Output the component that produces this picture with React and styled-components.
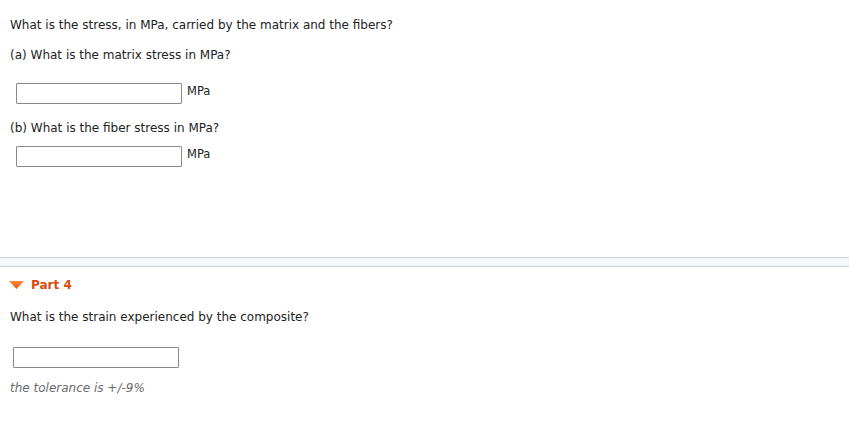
import React from 'react'
import styled, { createGlobalStyle } from 'styled-components'

const Global = createGlobalStyle`
  body {
    margin: 0;
    background: #fff;
    font-family: "DejaVu Sans", Verdana, sans-serif;
    font-size: 12px;
    color: #222;
  }
`

const Section = styled.div`
  display: flex;
  flex-direction: column;
  padding: 0 10px;
`

const Text = styled.p`
  margin: ${p => p.top || 0}px 0 0;
  line-height: 16px;
  color: #222;
`

const AnswerRow = styled.div`
  display: flex;
  align-items: flex-start;
  gap: 5px;
  margin: ${p => p.top || 0}px 0 0 ${p => p.left || 0}px;
`

const Field = styled.input`
  width: 166px;
  height: 21px;
  box-sizing: border-box;
  border: 1px solid #8a8a8a;
  border-radius: 1px;
  background: #fff;
  padding: 0 4px;
  font: inherit;
`

const Unit = styled.span`
  margin-top: 1px;
  line-height: 15px;
  font-size: 11.5px;
  color: #222;
`

const Divider = styled.div`
  margin-top: ${p => p.top}px;
  height: 8px;
  background: #f5f8fb;
  border-top: 1px solid #c9d0db;
  border-bottom: 1px solid #c9d0db;
`

const PartHeader = styled.div`
  display: flex;
  align-items: center;
  gap: 7px;
  margin-top: 10px;
  padding-left: 9px;
  height: 16px;
  color: #d84d0a;
  font-weight: bold;
  font-size: 12px;
`

const Tolerance = styled.p`
  margin: 12px 0 0;
  line-height: 16px;
  font-style: italic;
  color: #6b6b6b;
`

const Caret = () => (
  <svg width="15" height="8" viewBox="0 0 15 8">
    <defs>
      <linearGradient id="cg" x1="0" y1="0" x2="0" y2="1">
        <stop offset="0" stopColor="#ff8a3d" />
        <stop offset="1" stopColor="#e8500f" />
      </linearGradient>
    </defs>
    <polygon points="0,0 15,0 7.5,8" fill="url(#cg)" />
  </svg>
)

export default function App() {
  return (
    <>
      <Global />
      <Section>
        <Text top={17}>What is the stress, in MPa, carried by the matrix and the fibers?</Text>
        <Text top={14}>(a) What is the matrix stress in MPa?</Text>
        <AnswerRow top={20} left={6}>
          <Field />
          <Unit>MPa</Unit>
        </AnswerRow>
      </Section>
      <Section>
        <Text top={16}>(b) What is the fiber stress in MPa?</Text>
        <AnswerRow top={10} left={6}>
          <Field />
          <Unit>MPa</Unit>
        </AnswerRow>
      </Section>
      <Divider top={90} />
      <PartHeader>
        <Caret />
        <span>Part 4</span>
      </PartHeader>
      <Section>
        <Text top={16}>What is the strain experienced by the composite?</Text>
        <AnswerRow top={22} left={3}>
          <Field />
        </AnswerRow>
        <Tolerance>the tolerance is +/-9%</Tolerance>
      </Section>
    </>
  )
}
